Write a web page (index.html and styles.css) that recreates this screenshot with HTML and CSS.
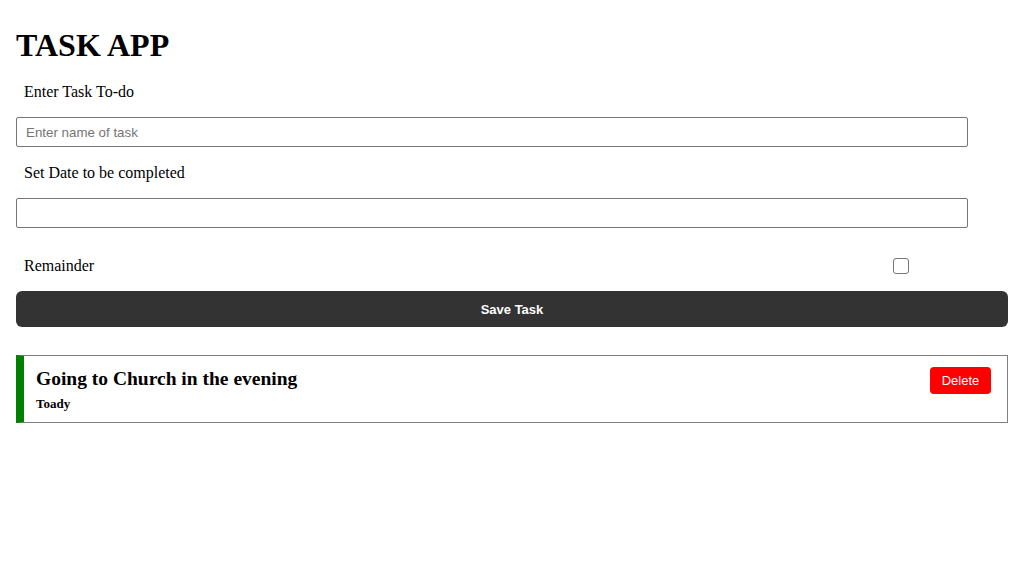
FILE: index.html
```html
<!DOCTYPE html>
<html lang="en">
<head>
<meta charset="utf-8">
<title>Task App</title>
<link rel="stylesheet" href="styles.css">
</head>
<body>
<div class="app">
  <h1 class="title">TASK APP</h1>
  <form class="task-form">
    <div class="field">
      <label class="field-label" for="task">Enter Task To-do</label>
      <input class="field-input" id="task" type="text" placeholder="Enter name of task">
    </div>
    <div class="field field-second">
      <label class="field-label" for="date">Set Date to be completed</label>
      <input class="field-input" id="date" type="text">
    </div>
    <div class="check-row">
      <label class="field-label" for="rem">Remainder</label>
      <input class="check" id="rem" type="checkbox">
    </div>
    <button class="save-btn" type="button">Save Task</button>
  </form>
  <div class="task">
    <div class="task-info">
      <h3 class="task-name">Going to Church in the evening</h3>
      <p class="task-day">Toady</p>
    </div>
    <button class="delete-btn" type="button">Delete</button>
  </div>
</div>
</body>
</html>
```

FILE: styles.css
```css
* { box-sizing: border-box; }

body {
  margin: 0;
  background: #fff;
  color: #000;
  font-family: "Liberation Serif", "Times New Roman", serif;
}

.app {
  padding: 27px 16px 0;
}

.title {
  margin: 0;
  font-size: 32px;
  line-height: 37px;
  font-weight: bold;
}

.task-form {
  margin: 0;
}

.field {
  margin-top: 19px;
}

.field-second {
  margin-top: 17px;
}

.field-label {
  display: block;
  padding-left: 8px;
  font-size: 16px;
  line-height: 18px;
  margin-bottom: 16px;
}

.field-input {
  display: block;
  width: 952px;
  height: 30px;
  margin: 0;
  padding: 0 9px;
  border: 1px solid #767676;
  border-radius: 2px;
  font-family: "Liberation Sans", Arial, sans-serif;
  font-size: 13.33px;
  color: #000;
  background: #fff;
}

.field-input::placeholder {
  color: #757575;
}

.check-row {
  display: flex;
  align-items: center;
  justify-content: space-between;
  height: 20px;
  margin-top: 28px;
}

.check-row .field-label {
  margin-bottom: 0;
}

.check {
  appearance: none;
  -webkit-appearance: none;
  width: 16px;
  height: 16px;
  margin: 0 99px 0 0;
  border: 1px solid #767676;
  border-radius: 3px;
  background: #fff;
}

.save-btn {
  display: block;
  width: 100%;
  height: 36px;
  margin-top: 15px;
  border: none;
  border-radius: 6px;
  background: #333;
  color: #fff;
  font-family: "Liberation Sans", Arial, sans-serif;
  font-size: 13px;
  font-weight: bold;
}

.task {
  display: flex;
  justify-content: space-between;
  align-items: flex-start;
  margin-top: 28px;
  padding: 11px 16px 10px 12px;
  border: 1px solid #808080;
  border-left: 8px solid #008000;
}

.task-name {
  margin: 0;
  font-size: 19.5px;
  line-height: 24px;
  font-weight: bold;
}

.task-day {
  margin: 5px 0 0;
  font-size: 13px;
  line-height: 16px;
  font-weight: bold;
}

.delete-btn {
  width: 61px;
  height: 27px;
  border: none;
  border-radius: 4px;
  background: #ff0000;
  color: #fff;
  font-family: "Liberation Sans", Arial, sans-serif;
  font-size: 13px;
}
```
